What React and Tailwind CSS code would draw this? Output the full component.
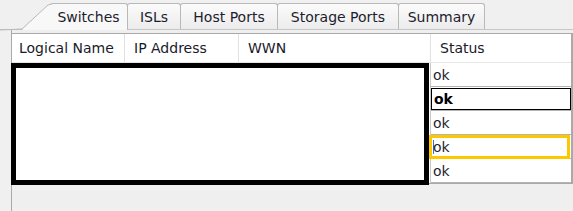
import React from "react";

const tabs = [
  { label: "Switches", width: 78, active: true },
  { label: "ISLs", width: 54 },
  { label: "Host Ports", width: 98 },
  { label: "Storage Ports", width: 122 },
  { label: "Summary", width: 87 },
];

const columns = [
  { label: "Logical Name", width: 113 },
  { label: "IP Address", width: 114 },
  { label: "WWN", width: 192 },
  { label: "Status", width: 140 },
];

const rows = ["ok", "ok", "ok", "ok", "ok"];

const Tab = ({ label, width, active }) => (
  <div
    className={`h-[26px] flex items-center justify-center rounded-t-[3px] border border-[#b9b9b9] text-[#1d1d2e] ${
      active
        ? "border-l-0 border-b-0 bg-[#f8f8f8] h-[27px] -mb-px"
        : "bg-gradient-to-b from-[#fbfbfb] to-[#ececec] border-b-0 -ml-px"
    }`}
    style={{ width }}
  >
    {label}
  </div>
);

const StatusCell = ({ value, index }) => {
  if (index === 1) {
    return (
      <div className="h-[24px] border-b border-[#b4b4b4] flex items-center">
        <div className="h-[22px] w-full border-[1.5px] border-black flex items-center pl-[2px] font-bold text-black">
          {value}
        </div>
      </div>
    );
  }
  if (index === 3) {
    return (
      <div className="h-[24px] border-b border-[#b4b4b4] flex items-center -ml-[2px]">
        <div className="h-[24px] w-[141px] border-[3px] border-[#fdc800] flex items-center pl-[1px] text-[#1f1f33] relative">
          <span className="w-px h-[14px] bg-[#3a6fd8] mr-[-1px]" />
          {value}
        </div>
      </div>
    );
  }
  return (
    <div className="h-[24px] border-b border-[#b4b4b4] flex items-center pl-[2px] text-[#1f1f33]">
      {value}
    </div>
  );
};

const App = () => {
  return (
    <div className="w-[573px] h-[211px] bg-[#f0f0f0] relative overflow-hidden font-['DejaVu_Sans',sans-serif] text-[14px] leading-none">
      <div className="relative h-[30px] flex items-end pl-[50px] border-b border-[#c6c6c6]">
        <svg className="absolute left-0 top-0" width="52" height="31" viewBox="0 0 52 31">
          <polygon points="22,30 48,5 52,4 52,31 22,31" fill="#f8f8f8" />
          <polyline points="0,30 22,29 48,5 52,4" fill="none" stroke="#b9b9b9" strokeWidth="1" />
        </svg>
        {tabs.map((t) => (
          <Tab key={t.label} {...t} />
        ))}
      </div>

      <div className="relative h-[181px] ml-[11px] border-l border-[#a9a9a9] pt-[3px] bg-[#efefef]">
        <div className="w-[561px] bg-white border-t border-[#a9a9a9] border-r-2 border-b">
          <div className="flex h-[29px] border-b border-[#e6e6e6]">
            {columns.map((c, i) => (
              <div
                key={c.label}
                className={`flex items-center text-[#1a1a2a] ${i === 0 ? "pl-[7px]" : "pl-[9px]"} ${
                  i < columns.length - 1 ? "border-r border-[#e2e2e2]" : ""
                }`}
                style={{ width: c.width }}
              >
                {c.label}
              </div>
            ))}
          </div>
          {rows.map((r, i) => (
            <div key={i} className="flex">
              <div className="w-[419px] h-[24px] border-r border-[#c8c8c8]" />
              <div className="w-[140px]">
                <StatusCell value={r} index={i} />
              </div>
            </div>
          ))}
        </div>

        <div className="absolute left-[-1px] top-[33px] w-[418px] h-[122px] border-[5px] border-black bg-white" />
      </div>
    </div>
  );
};

export default App;
